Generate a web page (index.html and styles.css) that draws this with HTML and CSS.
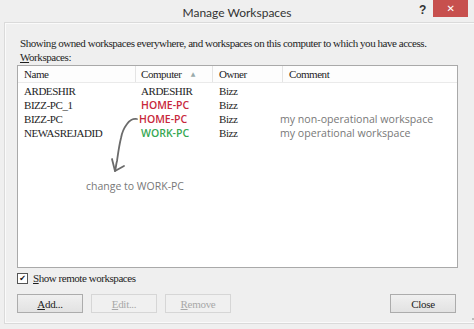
FILE: index.html
```html
<!DOCTYPE html>
<html lang="en">
<head>
  <meta charset="UTF-8">
  <title>Manage Workspaces</title>
  <link rel="stylesheet" href="styles.css">
</head>
<body>
  <div class="window">
    <div class="titlebar">
      <span></span>
      <h1>Manage Workspaces</h1>
      <div class="title-buttons">
        <span class="help">?</span>
        <span class="close-x">&#x2715;</span>
      </div>
    </div>
    <div class="panel">
      <p class="intro">Showing owned workspaces everywhere, and workspaces on this computer to which you have access.</p>
      <p class="label"><u>W</u>orkspaces:</p>
      <div class="listbox">
        <div class="list-head">
          <div class="col col-name">Name</div>
          <div class="col col-computer">Computer <span class="sort">&#x25B2;</span></div>
          <div class="col col-owner">Owner</div>
          <div class="col col-comment">Comment</div>
        </div>
        <div class="row">
          <div class="col col-name">ARDESHIR</div>
          <div class="col col-computer">ARDESHIR</div>
          <div class="col col-owner">Bizz</div>
          <div class="col col-comment"></div>
        </div>
        <div class="row">
          <div class="col col-name">BIZZ-PC_1</div>
          <div class="col col-computer"><span class="pc home">HOME-PC</span></div>
          <div class="col col-owner">Bizz</div>
          <div class="col col-comment"></div>
        </div>
        <div class="row">
          <div class="col col-name">BIZZ-PC</div>
          <div class="col col-computer"><span class="pc home shift">HOME-PC</span></div>
          <div class="col col-owner">Bizz</div>
          <div class="col col-comment"><span class="note">my non-operational workspace</span></div>
        </div>
        <div class="row">
          <div class="col col-name">NEWASREJADID</div>
          <div class="col col-computer"><span class="pc work">WORK-PC</span></div>
          <div class="col col-owner">Bizz</div>
          <div class="col col-comment"><span class="note">my operational workspace</span></div>
        </div>

        <!-- hand drawn annotation -->
        <svg class="scribble" width="60" height="70" viewBox="0 0 60 70">
          <path d="M37 5 C33 4 29 7 27 10 C24 14 22 18 21 24 C19 32 18 40 17 47 C16 50 16 54 15 57" fill="none" stroke="#6b6b6b" stroke-width="1.8" stroke-linecap="round"/>
          <path d="M12 45 L15 57 L24 52" fill="none" stroke="#6b6b6b" stroke-width="1.8" stroke-linecap="round" stroke-linejoin="round"/>
        </svg>
        <div class="change-note">change to WORK-PC</div>
      </div>

      <label class="check">
        <span class="box">&#x2714;</span>
        <span><u>S</u>how remote workspaces</span>
      </label>

      <div class="buttons">
        <button class="btn"><u>A</u>dd...</button>
        <button class="btn" disabled><u>E</u>dit...</button>
        <button class="btn" disabled><u>R</u>emove</button>
        <span class="spacer"></span>
        <button class="btn">Close</button>
      </div>
      <div class="grip"></div>
    </div>
  </div>
</body>
</html>
```

FILE: styles.css
```css
body {
  margin: 0;
  padding: 0;
  background-color: #f0f0f0;
  font-family: "Liberation Serif", serif;
  font-size: 11px;
  letter-spacing: -0.45px;
  color: #1e1e1e;
}

.window {
  width: 474px;
  height: 329px;
  background-color: #efefef;
  overflow: hidden;
}

.titlebar {
  display: grid;
  grid-template-columns: 1fr auto 1fr;
  align-items: center;
  height: 23px;
}

.titlebar h1 {
  margin: 0;
  font-family: "Lato", sans-serif;
  font-weight: normal;
  font-size: 12px;
  letter-spacing: 0;
  color: #333;
  padding-top: 1px;
}

.title-buttons {
  display: flex;
  justify-content: flex-end;
  align-items: flex-start;
  height: 23px;
  padding-right: 6px;
}

.help {
  font-family: "Liberation Sans", sans-serif;
  font-weight: bold;
  font-size: 12px;
  color: #333;
  margin-top: 3px;
  margin-right: 7px;
}

.close-x {
  display: flex;
  justify-content: center;
  align-items: center;
  width: 35px;
  height: 17px;
  background-color: #c7504e;
  color: #fff;
  font-family: "DejaVu Sans", sans-serif;
  font-size: 10px;
}

.panel {
  position: relative;
  margin-left: 5px;
  width: 463px;
  height: 298px;
  border: 1px solid #fafafa;
  box-shadow: 0 0 0 1px #dadada;
  padding: 0 0 0 11px;
  box-sizing: content-box;
}

.intro {
  margin: 12px 0 0 3px;
  line-height: 14px;
}

.label {
  margin: 0 0 0 3px;
  line-height: 14px;
}

.listbox {
  position: relative;
  width: 439px;
  height: 201px;
  margin-top: 1px;
  background-color: #fff;
  border: 1px solid #a9a9a9;
}

.list-head {
  display: flex;
  height: 16px;
  align-items: center;
  border-bottom: 1px solid #eaeaea;
  background-color: #fdfdfd;
  margin-bottom: 1px;
}

.list-head .col {
  border-right: 1px solid #e4e4e4;
  height: 16px;
  line-height: 16px;
}

.list-head .col-comment {
  border-right: none;
}

.row {
  display: flex;
  height: 14px;
  align-items: center;
}

.col {
  box-sizing: border-box;
  padding-left: 6px;
  white-space: nowrap;
}

.col-name {
  width: 118px;
}

.col-computer {
  width: 77px;
  padding-left: 5px;
}

.col-owner {
  width: 70px;
}

.col-comment {
  flex: 1;
}

.sort {
  font-family: "DejaVu Sans", sans-serif;
  font-size: 6px;
  color: #9aa;
  margin-left: 7px;
  vertical-align: 2px;
}

.pc {
  font-family: "Open Sans", sans-serif;
  font-weight: 600;
  font-size: 10.5px;
  letter-spacing: 0;
}

.home {
  color: #c8283c;
}

.work {
  color: #35a852;
}

.shift {
  margin-left: -2px;
}

.note {
  display: inline-block;
  margin-left: -9px;
  font-family: "Open Sans", sans-serif;
  font-size: 10.6px;
  letter-spacing: 0;
  color: #787878;
}

.scribble {
  position: absolute;
  left: 82px;
  top: 48px;
}

.change-note {
  position: absolute;
  left: 68px;
  top: 113px;
  font-family: "Open Sans", sans-serif;
  font-size: 10.5px;
  letter-spacing: 0;
  color: #787878;
}

.check {
  display: flex;
  align-items: center;
  gap: 5px;
  margin-top: 4px;
  height: 12px;
}

.box {
  display: flex;
  justify-content: center;
  align-items: center;
  width: 9px;
  height: 9px;
  border: 1px solid #555;
  background-color: #fff;
  font-family: "DejaVu Sans", sans-serif;
  font-size: 8px;
  color: #111;
}

.buttons {
  display: flex;
  gap: 8px;
  margin-top: 10px;
  width: 439px;
}

.spacer {
  flex: 1;
}

.btn {
  width: 66px;
  height: 19px;
  padding: 0;
  font-family: "Liberation Serif", serif;
  font-size: 11px;
  letter-spacing: -0.3px;
  color: #1e1e1e;
  background: linear-gradient(#f0f0f0, #e2e2e2);
  border: 1px solid #acacac;
}

.btn:disabled {
  color: #a8a8a8;
  background: #f0f0f0;
  border-color: #d6d6d6;
}

.grip {
  position: absolute;
  right: 2px;
  bottom: 2px;
  width: 6px;
  height: 6px;
  border-right: 2px dotted #bbb;
  border-bottom: 2px dotted #bbb;
  box-sizing: border-box;
}
```
